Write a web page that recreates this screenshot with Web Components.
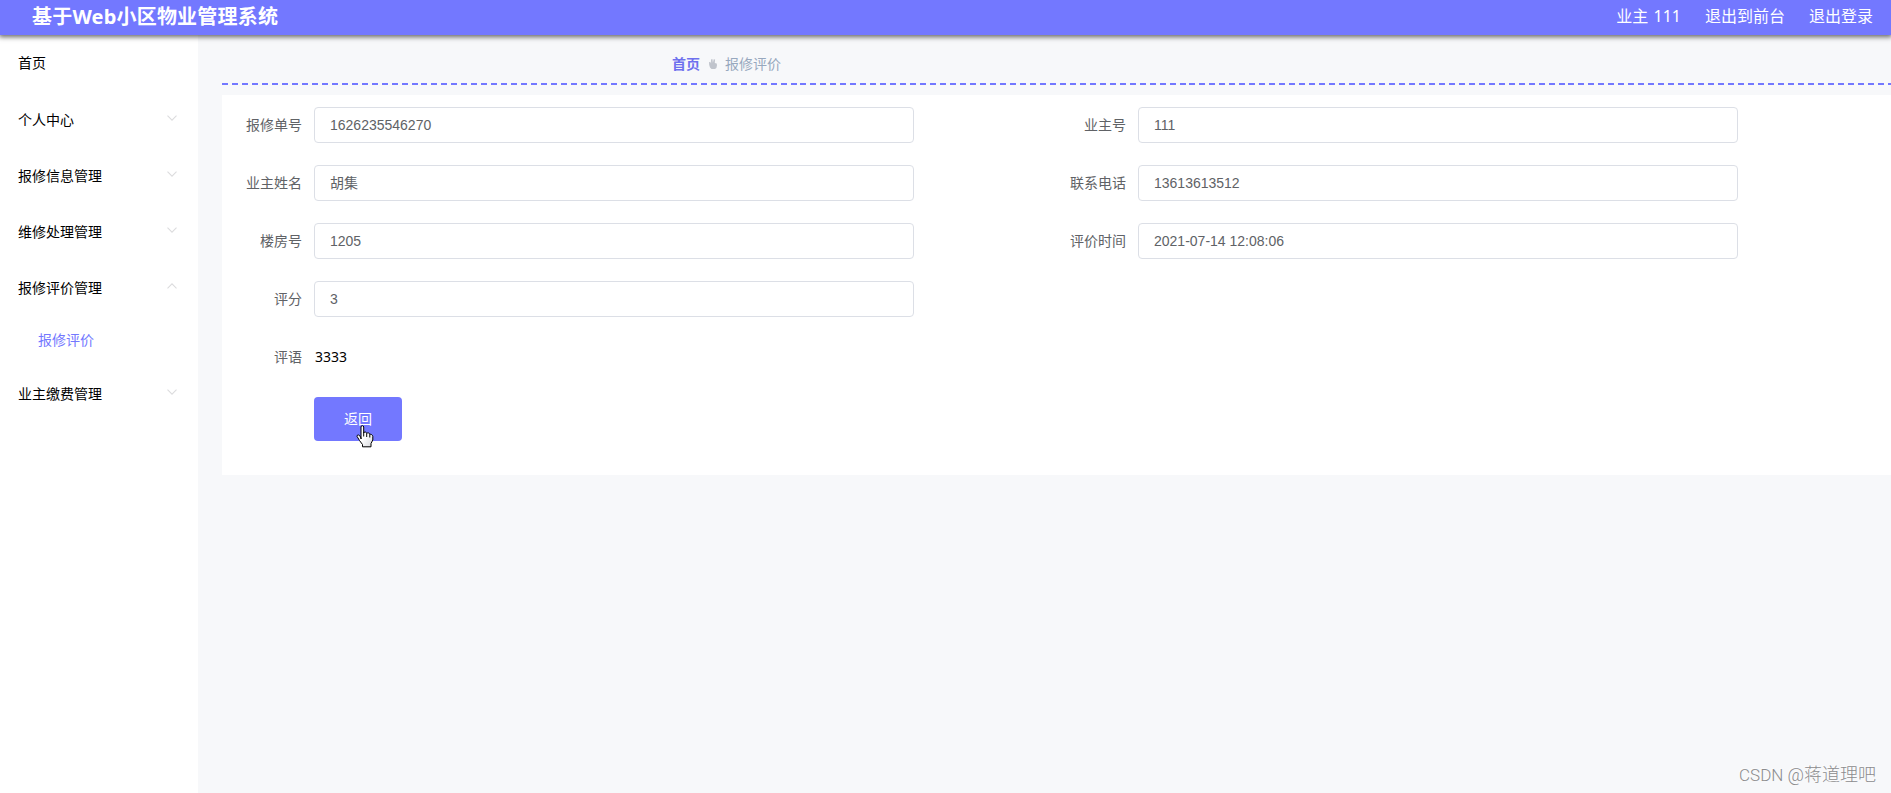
<!DOCTYPE html>
<html lang="zh-CN">
<head>
<meta charset="utf-8">
<title>基于Web小区物业管理系统</title>
<style>
html,body{margin:0;height:100%;overflow:hidden;background:#f7f8fa}
body{font:14px/20px "Noto Sans","Noto Sans CJK SC",sans-serif;color:#000}
</style>
</head>
<body>
<app-shell>
  <app-header slot="header">基于Web小区物业管理系统
    <span slot="actions">业主 111</span><span slot="actions">退出到前台</span><span slot="actions">退出登录</span>
  </app-header>
  <side-item slot="side" arrow="none">首页</side-item>
  <side-item slot="side">个人中心</side-item>
  <side-item slot="side">报修信息管理</side-item>
  <side-item slot="side">维修处理管理</side-item>
  <side-item slot="side" arrow="up">报修评价管理</side-item>
  <side-item slot="side" arrow="none" sub>报修评价</side-item>
  <side-item slot="side">业主缴费管理</side-item>
  <bread-crumb><span slot="home">首页</span>报修评价</bread-crumb>
  <form-card>
    <form-field label="报修单号">1626235546270</form-field>
    <form-field label="业主号">111</form-field>
    <form-field label="业主姓名">胡集</form-field>
    <form-field label="联系电话">13613613512</form-field>
    <form-field label="楼房号">1205</form-field>
    <form-field label="评价时间">2021-07-14 12:08:06</form-field>
    <form-field label="评分" wide>3</form-field>
    <form-field label="评语" wide plain>3333</form-field>
    <action-button slot="action">返回</action-button>
  </form-card>
  <water-mark slot="overlay">CSDN <span slot="name">@蒋道理吧</span></water-mark>
</app-shell>
<script>
const define = (name, html) => customElements.define(name, class extends HTMLElement {
  constructor() {
    super();
    this.attachShadow({mode: 'open'}).innerHTML = html;
  }
  connectedCallback() {
    const label = this.shadowRoot.querySelector('[data-label]');
    if (label) label.textContent = this.getAttribute('label');
  }
});

define('app-shell', `<style>
:host{display:grid;grid-template:35px minmax(0,1fr)/198px minmax(0,1fr);height:100vh;position:relative;overflow:hidden}
header{grid-column:1/3;z-index:2}
nav{background:#fff;padding-top:1px}
main{padding:0 0 0 24px;min-width:0}
</style><header><slot name="header"></slot></header><nav><slot name="side"></slot></nav><main><slot></slot></main><slot name="overlay"></slot>`);

define('app-header', `<style>
:host{display:flex;box-sizing:border-box;height:35px;padding:0 18px 3px 32px;align-items:center;justify-content:space-between;background:#7378ff;color:#fff;box-shadow:0 1px 5px 1px rgba(0,0,0,.6)}
h1{margin:0;padding-top:1px;font-size:20px;line-height:28px;font-weight:700;letter-spacing:.2px;white-space:nowrap}
div{display:flex;gap:24px;font-size:16px;line-height:24px;word-spacing:1px;padding-bottom:1px}
</style><h1><slot></slot></h1><div><slot name="actions"></slot></div>`);

define('side-item', `<style>
:host{display:flex;box-sizing:border-box;height:56px;padding:0 21px 0 18px;align-items:center;justify-content:space-between}
:host([arrow=none]){padding-bottom:2px}
:host([sub]){height:50px;padding-left:38px;color:#7378ff}
svg{display:block;margin-bottom:5px}
:host([arrow=none]) svg{display:none}
:host([arrow=up]) svg{transform:rotate(180deg)}
</style><slot></slot><svg width="10" height="6" viewBox="0 0 10 6" fill="none" stroke="#dcdcde" stroke-width="1.1"><path d="M.5.7 5 5.2 9.5.7"/></svg>`);

define('bread-crumb', `<style>
:host{display:flex;box-sizing:border-box;height:50px;padding:10px 0 0 450px;align-items:center;color:#97a8be;border-bottom:2px solid transparent;
background:repeating-linear-gradient(90deg,#7378ff 0 6px,transparent 6px 9.974px) 0 100%/100% 2px no-repeat border-box}
b{color:#6e70ee;font-weight:700}
svg{display:block;margin:0 8px 0 9px}
</style><b><slot name="home"></slot></b><svg width="8" height="10" viewBox="0 0 8 10" fill="#c0c4cc"><path d="M0 3.2 1.2 2.8 2.1 4.6 2 .5 3.4.1 3.9 3.8 4.7.2 6.1.5 5.8 4 7.7 4.5 8 6.3 7.4 9 6 10 2.5 10 1 8.5.2 6Z"/></svg><slot></slot>`);

define('form-card', `<style>
:host{display:block;box-sizing:border-box;margin-top:10px;height:380px;padding:12px 0 0 12px;background:#fff}
section{display:grid;grid-template-columns:824px 1fr;grid-auto-rows:36px;row-gap:22px}
footer{padding:22px 0 0 80px}
</style><section><slot></slot></section><footer><slot name="action"></slot></footer>`);

define('form-field', `<style>
:host{display:grid;grid-template-columns:68px 600px;column-gap:12px;align-items:center}
:host([wide]){grid-column:1/3}
label{text-align:right;color:#606266;white-space:nowrap}
div{box-sizing:border-box;height:36px;border:1px solid #dcdfe6;border-radius:4px;padding:0 15px;line-height:34px;color:#606266;font-family:"Liberation Sans","Noto Sans CJK SC",sans-serif}
:host([plain]) div{border-color:transparent;padding:0;color:#000;font-family:"Noto Sans",sans-serif}
</style><label data-label></label><div><slot></slot></div>`);

define('action-button', `<style>
:host{display:block;position:relative;width:88px;height:44px}
button{width:88px;height:44px;border:0;border-radius:4px;background:#7378ff;color:#fff;font:inherit;padding:0;cursor:pointer;display:block}
svg{position:absolute;left:42px;top:28px}
</style><button><slot></slot></button><svg width="18" height="23" viewBox="0 0 18 23"><defs><linearGradient id="g" x1="0" y1="0" x2="1" y2="1"><stop offset=".5" stop-color="#fff"/><stop offset="1" stop-color="#d4d6da"/></linearGradient></defs><path fill="url(#g)" stroke="#000" stroke-linejoin="round" d="M5 14V2Q5 .7 6.3.7T7.7 2V8Q8 6.8 9.3 7T10.7 8.6Q11.5 7.5 12.7 8T13.8 9.6Q14.5 9 15.5 9.5T16.8 11.5V15L15 18.5V21.8H6.5V19.5L3.5 15.5 1 11.3Q1 9.7 2.5 10T5 13Z"/><path stroke="#000" d="M7.7 7.5V11.5M10.7 8.5V12M13.8 9.5V12.5"/></svg>`);

define('water-mark', `<style>
:host{position:absolute;right:15px;bottom:6px;font:17px/24px Roboto,"Noto Sans CJK SC",sans-serif;font-weight:300;color:#8c8c8e;text-shadow:-1px -1px 0 rgba(255,255,255,.7);white-space:nowrap}
::slotted(span){font-size:18px}
</style><slot></slot><slot name="name"></slot>`);
</script>
</body>
</html>
